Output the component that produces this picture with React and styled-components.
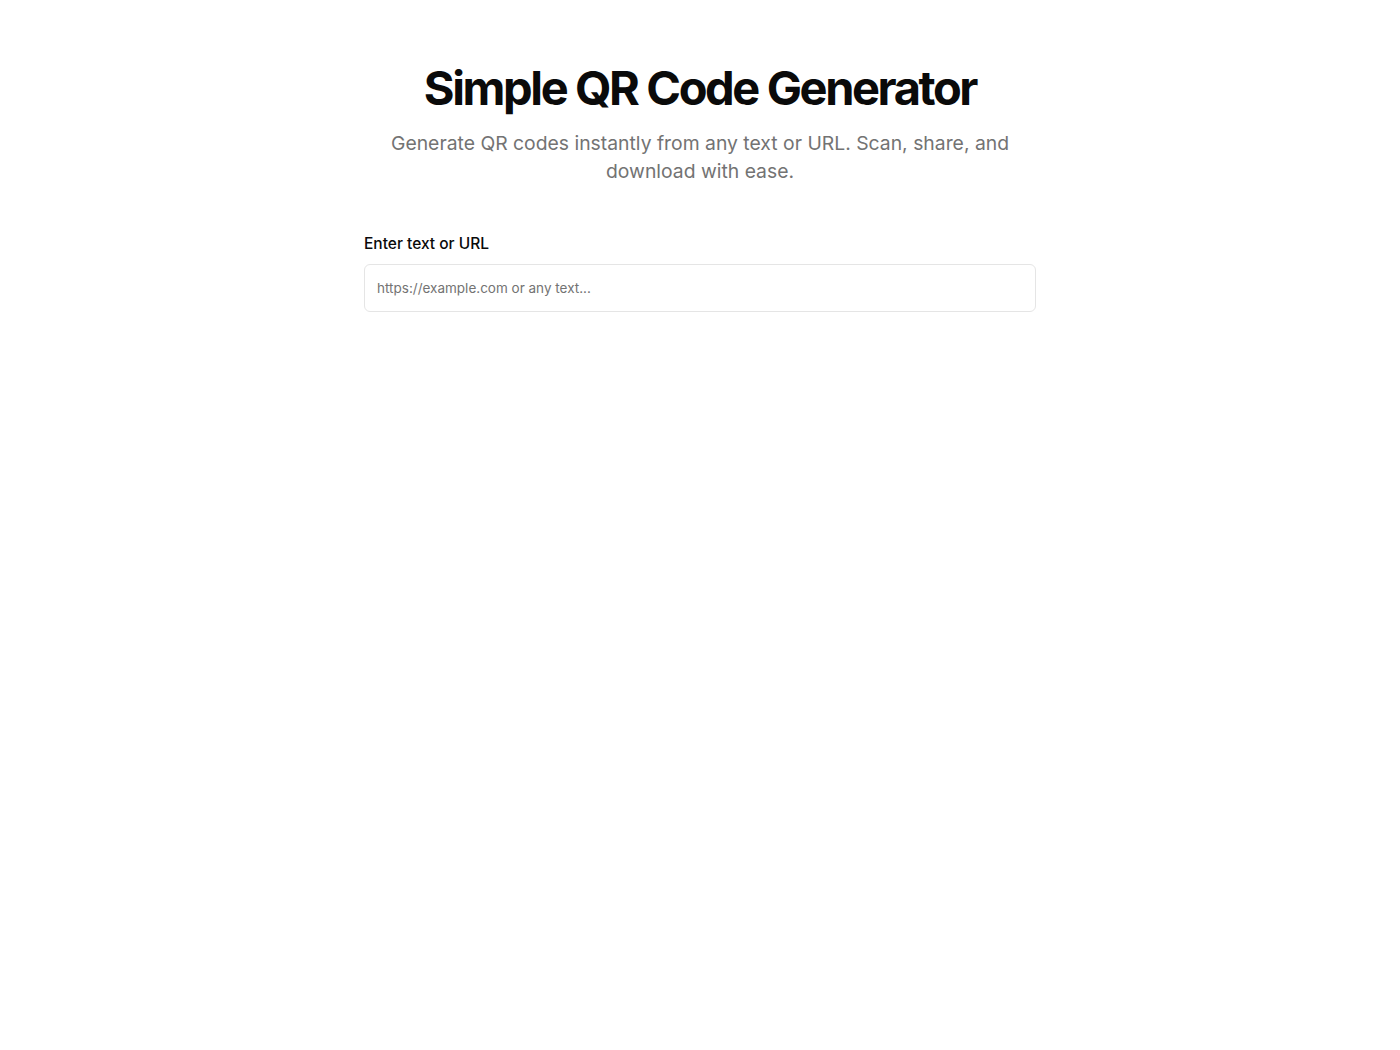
import React, { useState } from "react";
import styled, { createGlobalStyle } from "styled-components";

const Global = createGlobalStyle`
  html, body { margin: 0; padding: 0; background: #ffffff; }
  body { font-family: Inter, "Noto Sans", sans-serif; color: #0a0a0a; }
  * { box-sizing: border-box; }
`;

const Page = styled.main`
  min-height: 1050px;
  display: flex;
  justify-content: center;
  padding: 64px 16px;
`;

const Container = styled.div`
  width: 672px;
  display: flex;
  flex-direction: column;
`;

const Header = styled.header`
  display: flex;
  flex-direction: column;
  align-items: center;
  text-align: center;
  gap: 17px;
  margin-bottom: 47px;
`;

const Title = styled.h1`
  margin: 0;
  font-size: 47px;
  line-height: 48px;
  font-weight: 700;
  letter-spacing: -0.051em;
  color: #0a0a0a;
`;

const Subtitle = styled.p`
  margin: 0;
  font-size: 19.35px;
  line-height: 28px;
  color: #737373;
  max-width: 660px;
`;

const Field = styled.div`
  display: flex;
  flex-direction: column;
  gap: 8px;
`;

const Label = styled.label`
  font-size: 15.5px;
  line-height: 24px;
  font-weight: 500;
  color: #0a0a0a;
`;

const Input = styled.input`
  width: 100%;
  height: 48px;
  padding: 0 12px;
  border: 1px solid #e5e5e5;
  border-radius: 6px;
  font-family: inherit;
  font-size: 13.5px;
  color: #0a0a0a;
  background: #fff;
  outline: none;
  &::placeholder { color: #737373; }
`;

export default function App() {
  const [value, setValue] = useState("");
  return (
    <>
      <Global />
      <Page>
        <Container>
          <Header>
            <Title>Simple QR Code Generator</Title>
            <Subtitle>
              Generate QR codes instantly from any text or URL. Scan, share, and download with ease.
            </Subtitle>
          </Header>
          <Field>
            <Label htmlFor="qr-input">Enter text or URL</Label>
            <Input
              id="qr-input"
              placeholder="https://example.com or any text..."
              value={value}
              onChange={(e) => setValue(e.target.value)}
            />
          </Field>
        </Container>
      </Page>
    </>
  );
}
